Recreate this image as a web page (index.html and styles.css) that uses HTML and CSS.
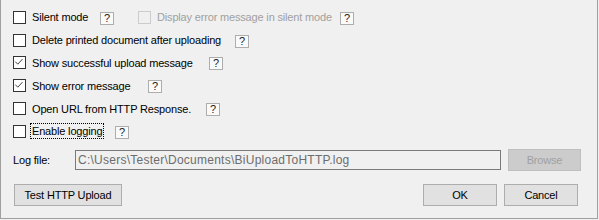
FILE: index.html
```html
<!DOCTYPE html>
<html>
<head>
<meta charset="utf-8">
<link rel="stylesheet" href="styles.css">
</head>
<body>
<div class="dialog">
  <div class="options">
    <div class="row">
      <span class="cb"></span>
      <span class="lbl w-silent">Silent mode</span>
      <span class="help">?</span>
      <span class="cb disabled sub"></span>
      <span class="lbl disabled-text w-display">Display error message in silent mode</span>
      <span class="help">?</span>
    </div>
    <div class="row">
      <span class="cb"></span>
      <span class="lbl w-delete">Delete printed document after uploading</span>
      <span class="help">?</span>
    </div>
    <div class="row">
      <span class="cb checked"><svg viewBox="0 0 13 13" width="11" height="11"><path d="M1.5 5.5 L4.5 8.5 L10 2.5" fill="none" stroke="#333" stroke-width="1.1"/></svg></span>
      <span class="lbl w-success">Show successful upload message</span>
      <span class="help">?</span>
    </div>
    <div class="row">
      <span class="cb checked"><svg viewBox="0 0 13 13" width="11" height="11"><path d="M1.5 5.5 L4.5 8.5 L10 2.5" fill="none" stroke="#333" stroke-width="1.1"/></svg></span>
      <span class="lbl w-error">Show error message</span>
      <span class="help">?</span>
    </div>
    <div class="row">
      <span class="cb"></span>
      <span class="lbl w-url">Open URL from HTTP Response.</span>
      <span class="help">?</span>
    </div>
    <div class="row">
      <span class="cb"></span>
      <span class="lbl w-logging"><span class="focus">Enable logging</span></span>
      <span class="help">?</span>
    </div>
  </div>
  <div class="log-row">
    <span class="log-label">Log file:</span>
    <span class="textbox">C:\Users\Tester\Documents\BiUploadToHTTP.log</span>
    <span class="btn btn-disabled browse">Browse</span>
  </div>
  <div class="button-row">
    <span class="btn test">Test HTTP Upload</span>
    <span class="spacer"></span>
    <span class="btn ok">OK</span>
    <span class="btn cancel">Cancel</span>
  </div>
</div>
</body>
</html>
```

FILE: styles.css
```css
html, body {
  margin: 0;
  padding: 0;
  background: #f0f0f0;
}
body {
  font-family: "Liberation Sans", Arial, sans-serif;
  font-size: 11px;
  letter-spacing: -0.17px;
  color: #000;
}
.dialog {
  box-sizing: border-box;
  width: 598px;
  height: 219px;
  border-left: 1px solid #a0a0a0;
  border-right: 1px solid #a0a0a0;
  border-bottom: 1px solid #a0a0a0;
  background: #f0f0f0;
  padding: 6px 0 0 12px;
  display: flex;
  flex-direction: column;
}
.options {
  display: flex;
  flex-direction: column;
}
.row {
  height: 22.8px;
  display: flex;
  align-items: center;
}
.cb {
  box-sizing: border-box;
  width: 13px;
  height: 13px;
  border: 1px solid #333;
  background: #fff;
  margin-right: 6px;
  display: flex;
  align-items: center;
  justify-content: center;
  flex: none;
}
.cb svg { display: block; }
.cb.disabled {
  border-color: #cccccc;
  background: #f0f0f0;
}
.cb.sub { margin-left: 24px; }
.lbl {
  white-space: nowrap;
  flex: none;
}
.disabled-text { color: #a0a0a0; }
.w-silent { width: 68px; }
.w-display { width: 183px; }
.w-delete { width: 203px; }
.w-success { width: 177px; }
.w-error { width: 116px; }
.w-url { width: 174px; }
.w-logging { width: 84px; margin-left: -1px; }
.focus {
  outline: 1px dotted #000;
  outline-offset: 0;
  padding: 1px 1px 1px 1px;
}
.help {
  box-sizing: border-box;
  width: 14px;
  height: 13px;
  border: 1px solid #adadad;
  background: #fafafa;
  font-size: 11px;
  line-height: 11px;
  letter-spacing: 0;
  text-align: center;
  color: #1a1a1a;
  flex: none;
  margin-top: 2px;
}
.log-row {
  margin-top: 6px;
  height: 22px;
  display: flex;
  align-items: center;
}
.log-label {
  width: 62px;
  flex: none;
}
.textbox {
  box-sizing: border-box;
  width: 426px;
  height: 20px;
  border: 1px solid #7a7a7a;
  background: #f0f0f0;
  color: #6d6d6d;
  padding: 0 2px;
  font-size: 12px;
  letter-spacing: 0.25px;
  line-height: 18px;
  flex: none;
}
.btn {
  box-sizing: border-box;
  height: 22px;
  border: 1px solid #adadad;
  background: #e1e1e1;
  display: flex;
  align-items: center;
  justify-content: center;
  flex: none;
}
.btn-disabled {
  background: #cccccc;
  border-color: #bfbfbf;
  color: #a0a0a0;
}
.browse {
  width: 73px;
  margin-left: 7px;
}
.button-row {
  margin-top: 13px;
  display: flex;
  align-items: center;
}
.test {
  width: 108px;
  margin-left: 1px;
}
.spacer { flex: 1; }
.ok { width: 74px; }
.cancel {
  width: 74px;
  margin-left: 7px;
  margin-right: 19px;
}
```
